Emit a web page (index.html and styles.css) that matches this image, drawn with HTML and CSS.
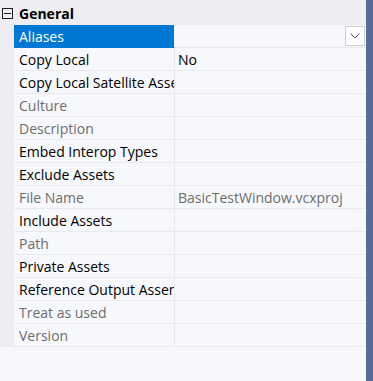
FILE: index.html
```html
<!DOCTYPE html>
<html lang="en">
<head>
    <meta charset="UTF-8">
    <title>Properties</title>
    <link rel="stylesheet" href="styles.css">
</head>
<body>
    <div class="panel">
        <div class="grid">
            <div class="category">
                <span class="toggle"></span>
                <span class="category-name">General</span>
            </div>

            <div class="row selected">
                <div class="gutter"></div>
                <div class="name">Aliases</div>
                <div class="value">
                    <span class="dropdown">
                        <svg width="10" height="6" viewBox="0 0 10 6"><path d="M0.5 0.5 L5 5 L9.5 0.5" fill="none" stroke="#555" stroke-width="1"/></svg>
                    </span>
                </div>
            </div>
            <div class="row">
                <div class="gutter"></div>
                <div class="name">Copy Local</div>
                <div class="value">No</div>
            </div>
            <div class="row">
                <div class="gutter"></div>
                <div class="name">Copy Local Satellite Assemblies</div>
                <div class="value"></div>
            </div>
            <div class="row readonly">
                <div class="gutter"></div>
                <div class="name">Culture</div>
                <div class="value"></div>
            </div>
            <div class="row readonly">
                <div class="gutter"></div>
                <div class="name">Description</div>
                <div class="value"></div>
            </div>
            <div class="row">
                <div class="gutter"></div>
                <div class="name">Embed Interop Types</div>
                <div class="value"></div>
            </div>
            <div class="row">
                <div class="gutter"></div>
                <div class="name">Exclude Assets</div>
                <div class="value"></div>
            </div>
            <div class="row readonly">
                <div class="gutter"></div>
                <div class="name">File Name</div>
                <div class="value">BasicTestWindow.vcxproj</div>
            </div>
            <div class="row">
                <div class="gutter"></div>
                <div class="name">Include Assets</div>
                <div class="value"></div>
            </div>
            <div class="row readonly">
                <div class="gutter"></div>
                <div class="name">Path</div>
                <div class="value"></div>
            </div>
            <div class="row">
                <div class="gutter"></div>
                <div class="name">Private Assets</div>
                <div class="value"></div>
            </div>
            <div class="row">
                <div class="gutter"></div>
                <div class="name">Reference Output Assembly</div>
                <div class="value"></div>
            </div>
            <div class="row readonly">
                <div class="gutter"></div>
                <div class="name">Treat as used</div>
                <div class="value"></div>
            </div>
            <div class="row readonly">
                <div class="gutter"></div>
                <div class="name">Version</div>
                <div class="value"></div>
            </div>
        </div>
        <div class="scrollbar"></div>
    </div>
</body>
</html>
```

FILE: styles.css
```css
html, body {
    margin: 0;
    padding: 0;
    height: 100%;
}

body {
    font-family: "Open Sans", "Noto Sans", sans-serif;
    font-size: 14px;
    color: #000;
    background: #f7f8fc;
}

.panel {
    display: flex;
    height: 100%;
}

.grid {
    flex: 1;
    display: flex;
    flex-direction: column;
}

.scrollbar {
    width: 7px;
    background: #5b6b99;
}

.category {
    height: 25px;
    padding-top: 2px;
    box-sizing: border-box;
    background: #eeedf2;
    display: flex;
    align-items: center;
}

.toggle {
    position: relative;
    box-sizing: border-box;
    width: 11px;
    height: 11px;
    margin-left: 2px;
    margin-right: 6px;
    border: 1px solid #1e1e1e;
}

.toggle::after {
    content: "";
    position: absolute;
    left: 1px;
    right: 1px;
    top: 4px;
    height: 1px;
    background: #1e1e1e;
}

.category-name {
    font-weight: bold;
}

.row {
    display: grid;
    grid-template-columns: 14px 161px 1fr;
    height: 23px;
}

.gutter {
    background: #eeedf2;
}

.name,
.value {
    box-sizing: border-box;
    border-bottom: 1px solid #e8e9ef;
    padding-top: 1px;
    line-height: 21px;
    white-space: nowrap;
    overflow: hidden;
}

.name {
    padding-left: 5px;
    border-right: 1px solid #e8e9ef;
}

.value {
    padding-left: 3px;
    display: flex;
    align-items: center;
}

.readonly .name,
.readonly .value {
    color: #6d6d6d;
}

.selected .name {
    background: #0078d4;
    color: #fff;
    border-right-color: #f7f8fc;
    border-bottom-color: #0078d4;
}

.selected .value {
    padding-top: 0;
}

.dropdown {
    margin-left: auto;
    margin-right: 1px;
    box-sizing: border-box;
    width: 20px;
    height: 20px;
    background: #fff;
    border: 1px solid #cdcdd3;
    display: flex;
    align-items: center;
    justify-content: center;
}
```
